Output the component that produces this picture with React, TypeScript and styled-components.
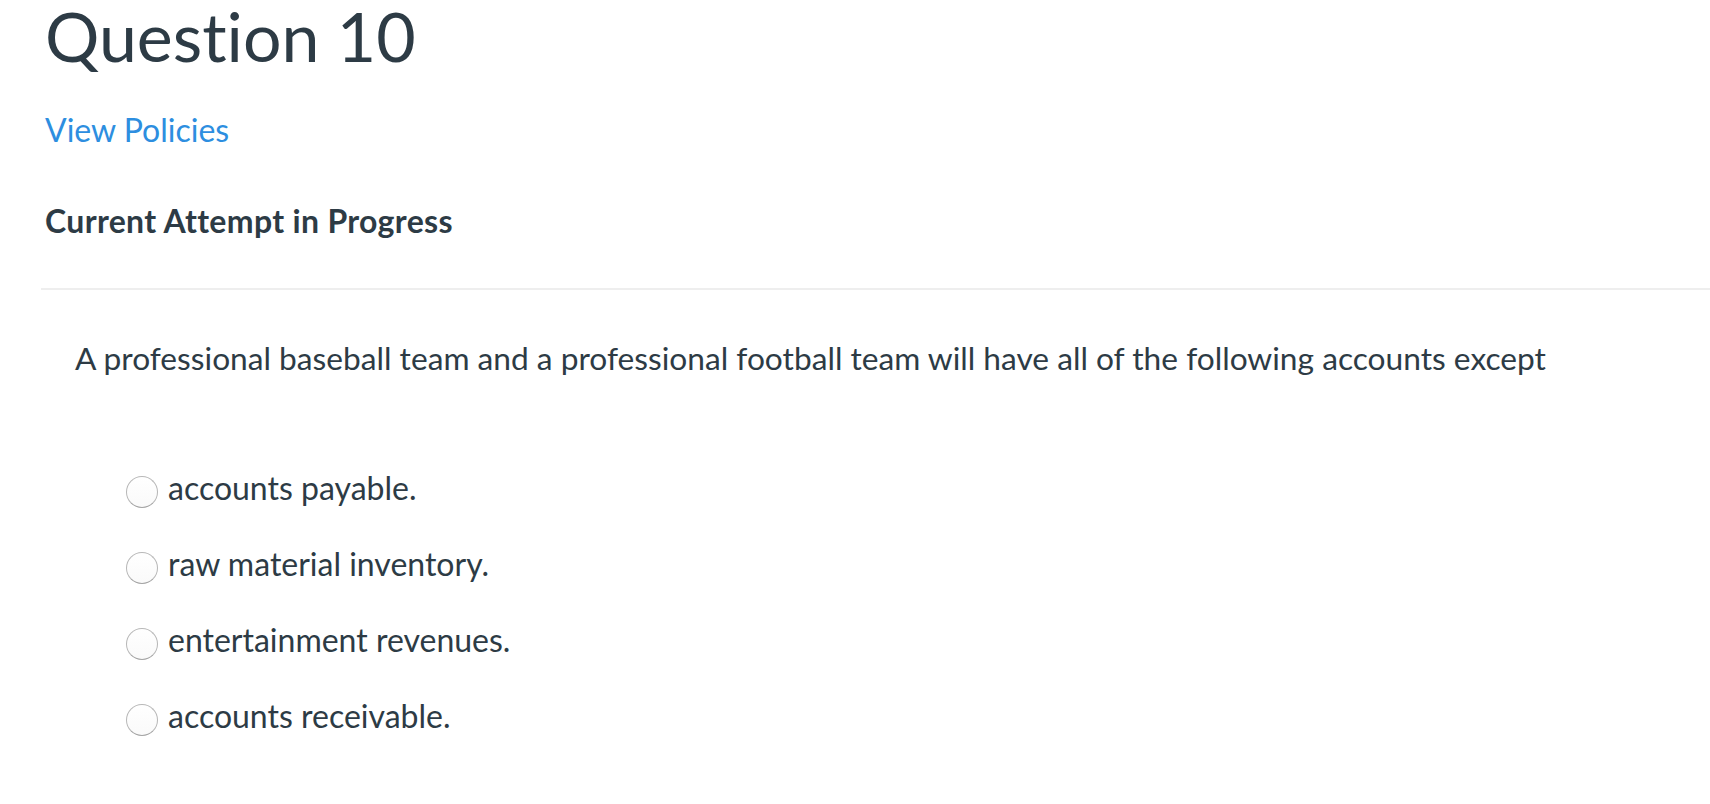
import React from "react";
import styled, { createGlobalStyle } from "styled-components";

const GlobalStyle = createGlobalStyle`
  html, body {
    margin: 0;
    padding: 0;
    background: #ffffff;
  }
  body {
    font-family: Lato, "Noto Sans", "Liberation Sans", sans-serif;
    color: #2d3b45;
    font-variant-ligatures: none;
    font-feature-settings: "liga" 0, "clig" 0;
  }
`;

const answers = [
  "accounts payable.",
  "raw material inventory.",
  "entertainment revenues.",
  "accounts receivable.",
];

const Page = styled.div`
  padding: 2px 0 0 45px;
`;

const Title = styled.h1`
  margin: 0;
  font-size: 68px;
  line-height: 68px;
  font-weight: 400;
`;

const PolicyLink = styled.a`
  display: block;
  margin-top: 40px;
  font-size: 32px;
  line-height: 40px;
  color: #2d8ee0;
  text-decoration: none;
  cursor: pointer;
`;

const AttemptLabel = styled.h2`
  margin: 51px 0 0;
  font-size: 32px;
  line-height: 40px;
  font-weight: 700;
  letter-spacing: 0.32px;
`;

const Divider = styled.hr`
  margin: 47px 0 0 -4px;
  border: 0;
  height: 2px;
  background: #eeeeee;
`;

const QuestionText = styled.p`
  margin: 48px 0 0;
  padding-left: 30px;
  font-size: 31.7px;
  line-height: 40px;
`;

const AnswerList = styled.div`
  display: flex;
  flex-direction: column;
  gap: 36px;
  margin-top: 90px;
  padding-left: 81px;
`;

const AnswerRow = styled.label`
  display: flex;
  align-items: flex-start;
  gap: 10px;
  font-size: 32px;
  line-height: 40px;
  cursor: pointer;
`;

const Radio = styled.input.attrs({ type: "radio" })`
  appearance: none;
  margin: 8px 0 0;
  width: 32px;
  height: 32px;
  flex: none;
  border-radius: 50%;
  border: 1.5px solid #b8b8b8;
  border-bottom-color: #a4a4a4;
  background: linear-gradient(#ffffff, #fafafa);
  box-sizing: border-box;
`;

export default function App() {
  return (
    <>
      <GlobalStyle />
      <Page>
        <Title>Question 10</Title>
        <PolicyLink>View Policies</PolicyLink>
        <AttemptLabel>Current Attempt in Progress</AttemptLabel>
        <Divider />
        <QuestionText>
          A professional baseball team and a professional football team will have all of the following accounts except
        </QuestionText>
        <AnswerList>
          {answers.map((answer) => (
            <AnswerRow key={answer}>
              <Radio name="q10" />
              <span>{answer}</span>
            </AnswerRow>
          ))}
        </AnswerList>
      </Page>
    </>
  );
}
